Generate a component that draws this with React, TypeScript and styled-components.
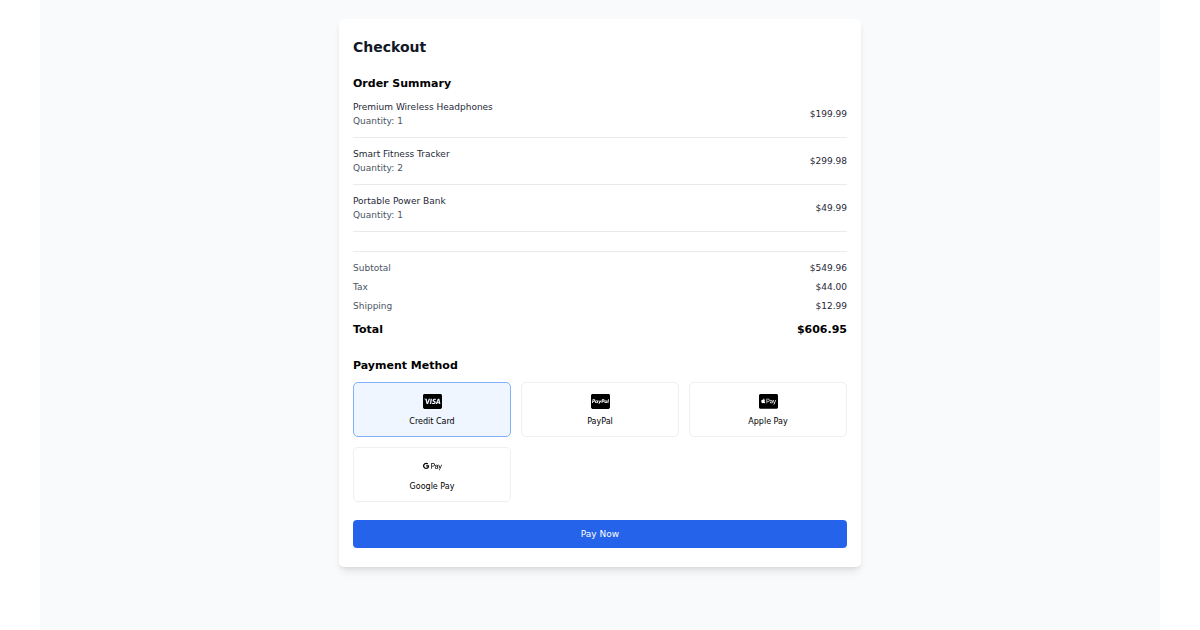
import React, { useState } from "react";
import styled, { createGlobalStyle } from "styled-components";
import type { IconType } from "react-icons";
import { FaCcApplePay, FaCcPaypal, FaCcVisa, FaGooglePay } from "react-icons/fa";

const GlobalStyle = createGlobalStyle`
  *, *::before, *::after { box-sizing: border-box; }
  body {
    margin: 0;
    background: #ffffff;
    color: #000000;
    font-family: "DejaVu Sans", sans-serif;
    font-size: 9px;
    line-height: 14px;
  }
  h1, h2, p, ul, dl, dd { margin: 0; padding: 0; }
`;

const Page = styled.main`
  min-height: 100vh;
  margin: 0 40px;
  padding: 19px;
  background: #f9fafb;
`;

const Card = styled.div`
  max-width: 522px;
  margin: 0 auto;
  padding: 18px 14px 19px;
  border-radius: 5px;
  background: #ffffff;
  box-shadow: 0 6px 9px -2px rgba(0, 0, 0, 0.1), 0 2px 4px -2px rgba(0, 0, 0, 0.1);
`;

const Title = styled.h1`
  color: #111827;
  font-size: 14px;
  font-weight: 700;
  line-height: 20px;
`;

const Section = styled.section`
  margin-top: 18px;
`;

const SectionTitle = styled.h2`
  margin-bottom: 7px;
  font-size: 11px;
  font-weight: 700;
  line-height: 18px;
`;

const Items = styled.ul`
  list-style: none;
`;

const Item = styled.li`
  display: flex;
  align-items: center;
  justify-content: space-between;
  padding: 9px 0;
  border-bottom: 1px solid #e8eaed;

  &:first-child { padding-top: 0; }
`;

const ItemName = styled.p`
  color: #1f2937;
`;

const Quantity = styled.p`
  color: #4b5563;
`;

const Price = styled.span`
  color: #1f2937;
`;

const Totals = styled.dl`
  display: flex;
  flex-direction: column;
  gap: 5px;
  margin-top: 19px;
  padding-top: 9px;
  border-top: 1px solid #e8eaed;
`;

const TotalRow = styled.div`
  display: flex;
  justify-content: space-between;
  color: #1f2937;

  dt { color: #4b5563; }
`;

const GrandTotal = styled(TotalRow)`
  padding-top: 3px;
  color: #000000;
  font-size: 11px;
  font-weight: 700;
  line-height: 18px;

  dt { color: #000000; }
`;

const Methods = styled.div`
  display: grid;
  grid-template-columns: repeat(3, 1fr);
  gap: 10px;
`;

const Method = styled.button<{ $selected: boolean }>`
  display: flex;
  flex-direction: column;
  align-items: center;
  gap: 5px;
  padding: 9px 9px 8px;
  border: 1px solid ${(p) => (p.$selected ? "#82b0f9" : "#eeeff1")};
  border-radius: 5px;
  background: ${(p) => (p.$selected ? "#eff6ff" : "#ffffff")};
  color: #000000;
  font-family: inherit;
  font-size: 8px;
  line-height: 12px;
  cursor: pointer;

  svg {
    width: 19px;
    height: 19px;
  }
`;

const PayButton = styled.button`
  display: block;
  width: 100%;
  margin-top: 18px;
  padding: 7px 14px;
  border: 0;
  border-radius: 4px;
  background: #2563eb;
  color: #ffffff;
  font-family: inherit;
  font-size: 9px;
  line-height: 14px;
  cursor: pointer;
`;

const items = [
  { name: "Premium Wireless Headphones", quantity: 1, price: 199.99 },
  { name: "Smart Fitness Tracker", quantity: 2, price: 149.99 },
  { name: "Portable Power Bank", quantity: 1, price: 49.99 },
];

const methods: { id: string; label: string; Icon: IconType }[] = [
  { id: "card", label: "Credit Card", Icon: FaCcVisa },
  { id: "paypal", label: "PayPal", Icon: FaCcPaypal },
  { id: "apple", label: "Apple Pay", Icon: FaCcApplePay },
  { id: "google", label: "Google Pay", Icon: FaGooglePay },
];

const money = (value: number) => `$${value.toFixed(2)}`;

export default function App() {
  const [selected, setSelected] = useState("card");
  const subtotal = items.reduce((sum, item) => sum + item.price * item.quantity, 0);
  const tax = subtotal * 0.08;
  const shipping = 12.99;

  return (
    <>
      <GlobalStyle />
      <Page>
        <Card>
          <Title>Checkout</Title>
          <Section>
            <SectionTitle>Order Summary</SectionTitle>
            <Items>
              {items.map((item) => (
                <Item key={item.name}>
                  <div>
                    <ItemName>{item.name}</ItemName>
                    <Quantity>Quantity: {item.quantity}</Quantity>
                  </div>
                  <Price>{money(item.price * item.quantity)}</Price>
                </Item>
              ))}
            </Items>
            <Totals>
              <TotalRow>
                <dt>Subtotal</dt>
                <dd>{money(subtotal)}</dd>
              </TotalRow>
              <TotalRow>
                <dt>Tax</dt>
                <dd>{money(tax)}</dd>
              </TotalRow>
              <TotalRow>
                <dt>Shipping</dt>
                <dd>{money(shipping)}</dd>
              </TotalRow>
              <GrandTotal>
                <dt>Total</dt>
                <dd>{money(subtotal + tax + shipping)}</dd>
              </GrandTotal>
            </Totals>
          </Section>
          <Section>
            <SectionTitle id="payment-heading">Payment Method</SectionTitle>
            <Methods role="group" aria-labelledby="payment-heading">
              {methods.map(({ id, label, Icon }) => (
                <Method
                  key={id}
                  type="button"
                  $selected={selected === id}
                  aria-pressed={selected === id}
                  onClick={() => setSelected(id)}
                >
                  <Icon aria-hidden="true" />
                  <span>{label}</span>
                </Method>
              ))}
            </Methods>
          </Section>
          <PayButton type="button">Pay Now</PayButton>
        </Card>
      </Page>
    </>
  );
}
